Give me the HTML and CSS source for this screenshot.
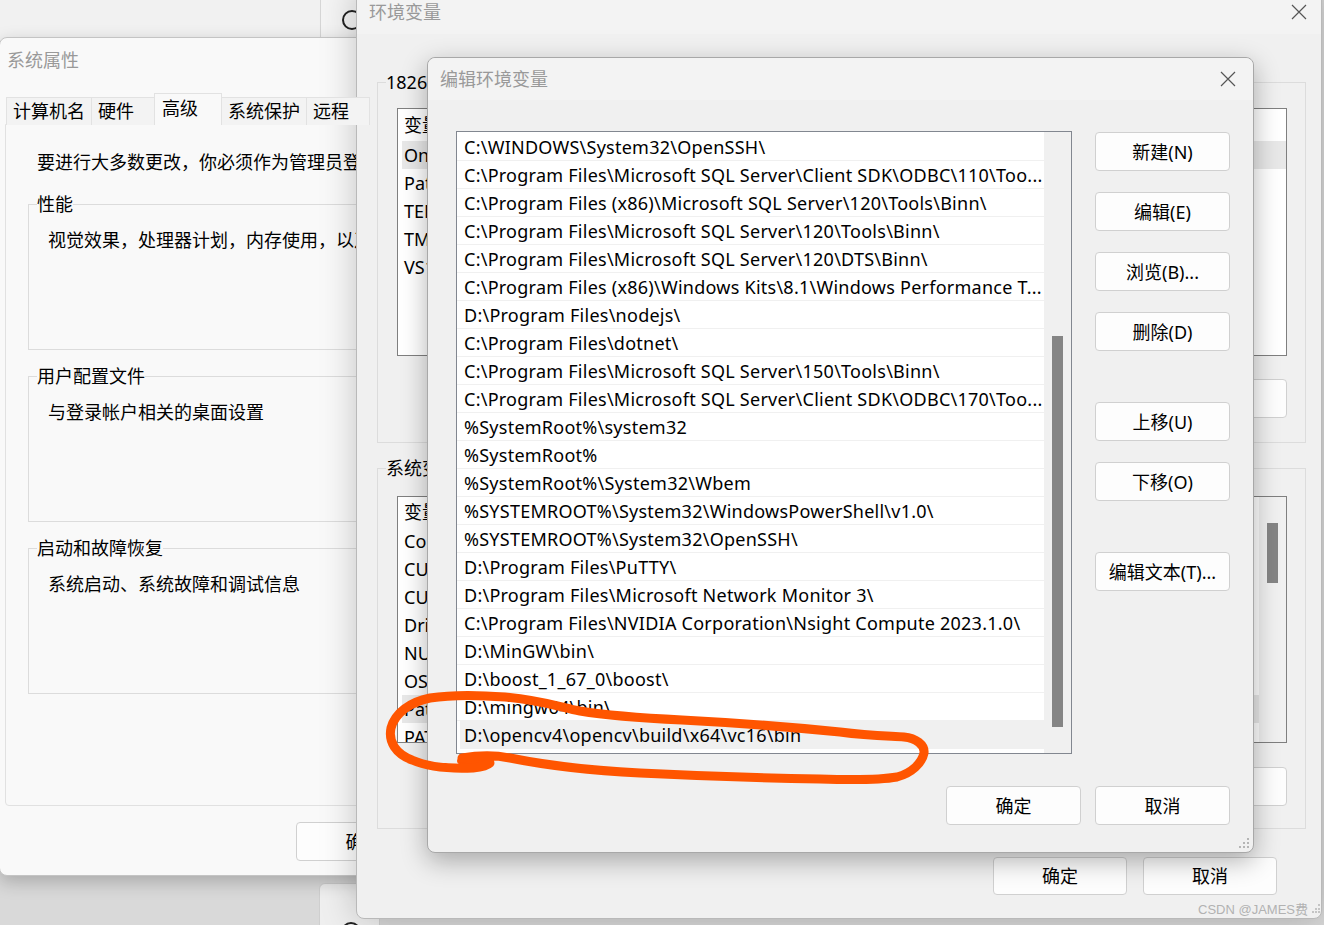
FILE: index.html
```html
<!DOCTYPE html>
<html lang="zh-CN">
<head>
<meta charset="utf-8">
<title>编辑环境变量</title>
<link rel="stylesheet" href="styles.css">
</head>
<body>
<div class="desktop">
  <div class="back-top">
    <div class="back-top-pane"><span class="radio"></span></div>
  </div>
  <div class="back-bottom">
    <div class="back-bottom-box"><span class="radio"></span></div>
  </div>

  <section class="win win-sys">
    <header class="titlebar"><span class="title">系统属性</span></header>
    <nav class="tabs">
      <span class="tab">计算机名</span>
      <span class="tab">硬件</span>
      <span class="tab active">高级</span>
      <span class="tab">系统保护</span>
      <span class="tab">远程</span>
    </nav>
    <div class="tab-panel">
      <p class="note">要进行大多数更改，你必须作为管理员登录。</p>
      <fieldset class="group"><legend>性能</legend><p>视觉效果，处理器计划，内存使用，以及虚拟内存</p></fieldset>
      <fieldset class="group"><legend>用户配置文件</legend><p>与登录帐户相关的桌面设置</p></fieldset>
      <fieldset class="group"><legend>启动和故障恢复</legend><p>系统启动、系统故障和调试信息</p></fieldset>
    </div>
    <div class="sys-foot">
      <button class="btn">确定</button>
      <button class="btn">取消</button>
    </div>
  </section>

  <section class="win win-env">
    <header class="titlebar">
      <span class="title">环境变量</span>
      <span class="close"><svg width="16" height="16" viewBox="0 0 16 16"><path d="M1 1 15 15M15 1 1 15" stroke="#555" stroke-width="1.2" fill="none"/></svg></span>
    </header>
    <div class="env-body">
      <fieldset class="env-group first">
        <legend>18260的用户变量(U)</legend>
        <div class="var-list">
          <div class="var-row head"><span class="c1">变量</span><span>值</span></div>
          <div class="var-row sel"><span class="c1">OneDrive</span><span>C:\Users\18260\OneDrive</span></div>
          <div class="var-row"><span class="c1">Path</span><span>C:\Users\18260\AppData\Local</span></div>
          <div class="var-row"><span class="c1">TEMP</span><span>C:\Users\18260\AppData\Local\Temp</span></div>
          <div class="var-row"><span class="c1">TMP</span><span>C:\Users\18260\AppData\Local\Temp</span></div>
          <div class="var-row"><span class="c1">VS140COMNTOOLS</span><span>C:\Program Files</span></div>
        </div>
        <div class="env-btns">
          <button class="btn">新建(N)...</button>
          <button class="btn">编辑(E)...</button>
          <button class="btn">删除(D)</button>
        </div>
      </fieldset>
      <fieldset class="env-group second">
        <legend>系统变量(S)</legend>
        <div class="var-list scrolled">
          <div class="var-rows">
            <div class="var-row head"><span class="c1">变量</span><span>值</span></div>
            <div class="var-row"><span class="c1">ComSpec</span><span>C:\WINDOWS\system32\cmd.exe</span></div>
            <div class="var-row"><span class="c1">CUDA_PATH</span><span>C:\Program Files</span></div>
            <div class="var-row"><span class="c1">CUDA_PATH_V12_1</span><span>C:\Program Files</span></div>
            <div class="var-row"><span class="c1">DriverData</span><span>C:\Windows</span></div>
            <div class="var-row"><span class="c1">NUMBER_OF_PROCESSORS</span><span>16</span></div>
            <div class="var-row"><span class="c1">OS</span><span>Windows_NT</span></div>
            <div class="var-row sel"><span class="c1">Path</span><span>C:\WINDOWS</span></div>
            <div class="var-row"><span class="c1">PATHEXT</span><span>.COM;.EXE</span></div>
          </div>
          <div class="vscroll"><span class="vthumb"></span></div>
        </div>
        <div class="env-btns">
          <button class="btn">新建(W)...</button>
          <button class="btn">编辑(I)...</button>
          <button class="btn">删除(L)</button>
        </div>
      </fieldset>
      <div class="env-foot">
        <button class="btn">确定</button>
        <button class="btn">取消</button>
      </div>
    </div>
  </section>

  <section class="win win-edit">
    <header class="titlebar">
      <span class="title">编辑环境变量</span>
      <span class="close"><svg width="16" height="16" viewBox="0 0 16 16"><path d="M1 1 15 15M15 1 1 15" stroke="#555" stroke-width="1.2" fill="none"/></svg></span>
    </header>
    <div class="edit-body">
      <div class="edit-main">
        <div class="path-list">
          <div class="path-rows">
            <div class="prow">C:\WINDOWS\System32\OpenSSH\</div>
            <div class="prow">C:\Program Files\Microsoft SQL Server\Client SDK\ODBC\110\Too...</div>
            <div class="prow">C:\Program Files (x86)\Microsoft SQL Server\120\Tools\Binn\</div>
            <div class="prow">C:\Program Files\Microsoft SQL Server\120\Tools\Binn\</div>
            <div class="prow">C:\Program Files\Microsoft SQL Server\120\DTS\Binn\</div>
            <div class="prow">C:\Program Files (x86)\Windows Kits\8.1\Windows Performance T...</div>
            <div class="prow">D:\Program Files\nodejs\</div>
            <div class="prow">C:\Program Files\dotnet\</div>
            <div class="prow">C:\Program Files\Microsoft SQL Server\150\Tools\Binn\</div>
            <div class="prow">C:\Program Files\Microsoft SQL Server\Client SDK\ODBC\170\Too...</div>
            <div class="prow">%SystemRoot%\system32</div>
            <div class="prow">%SystemRoot%</div>
            <div class="prow">%SystemRoot%\System32\Wbem</div>
            <div class="prow">%SYSTEMROOT%\System32\WindowsPowerShell\v1.0\</div>
            <div class="prow">%SYSTEMROOT%\System32\OpenSSH\</div>
            <div class="prow">D:\Program Files\PuTTY\</div>
            <div class="prow">D:\Program Files\Microsoft Network Monitor 3\</div>
            <div class="prow">C:\Program Files\NVIDIA Corporation\Nsight Compute 2023.1.0\</div>
            <div class="prow">D:\MinGW\bin\</div>
            <div class="prow">D:\boost_1_67_0\boost\</div>
            <div class="prow">D:\mingw64\bin\</div>
            <div class="prow sel">D:\opencv4\opencv\build\x64\vc16\bin</div>
          </div>
          <div class="pscroll"><span class="pthumb"></span></div>
        </div>
        <div class="edit-btns">
          <button class="btn">新建(N)</button>
          <button class="btn">编辑(E)</button>
          <button class="btn">浏览(B)...</button>
          <button class="btn">删除(D)</button>
          <button class="btn gap">上移(U)</button>
          <button class="btn">下移(O)</button>
          <button class="btn gap">编辑文本(T)...</button>
        </div>
      </div>
      <div class="edit-foot">
        <button class="btn">确定</button>
        <button class="btn">取消</button>
      </div>
    </div>
    <svg class="grip" width="12" height="12" viewBox="0 0 12 12"><g fill="#b5b5b5"><rect x="9" y="1" width="2" height="2"/><rect x="5" y="5" width="2" height="2"/><rect x="9" y="5" width="2" height="2"/><rect x="1" y="9" width="2" height="2"/><rect x="5" y="9" width="2" height="2"/><rect x="9" y="9" width="2" height="2"/></g></svg>
  </section>

  <svg class="scribble" width="1324" height="925" viewBox="0 0 1324 925">
    <ellipse cx="474" cy="761" rx="17" ry="7" fill="#ff5500"/>
    <path d="M462 758 C 480 755 495 755 510 758 C 540 764 580 770 640 773 C 700 776 760 778 820 779 C 850 780 880 780 897 777 C 912 773 922 763 924 753 C 925 745 916 738 904 737 C 890 736 870 736 840 732 C 800 728 740 723 682 720 C 640 718 610 716 580 711 C 560 707 540 700 505 697 C 480 695 455 694 430 698 C 410 702 395 713 391 728 C 388 742 396 754 412 760 C 428 767 450 769 473 768 C 482 767 488 765 490 763" fill="none" stroke="#ff5500" stroke-width="9" stroke-linecap="round" stroke-linejoin="round"/>
  </svg>

  <div class="watermark"><span>CSDN @JAMES费</span><svg width="10" height="10" viewBox="0 0 10 10"><g fill="#c4c4c4"><rect x="7" y="0" width="2" height="2"/><rect x="4" y="4" width="2" height="2"/><rect x="7" y="4" width="2" height="2"/><rect x="1" y="7" width="2" height="2"/><rect x="4" y="7" width="2" height="2"/><rect x="7" y="7" width="2" height="2"/></g></svg></div>
</div>
</body>
</html>
```

FILE: styles.css
```css
* { box-sizing: border-box; }
html, body { margin: 0; padding: 0; }
body {
  width: 1324px;
  height: 925px;
  overflow: hidden;
  font-family: "Noto Sans", "Noto Sans CJK SC", sans-serif;
  font-size: 18px;
  color: #000;
  background: #dcdcdc;
}
.desktop {
  position: relative;
  width: 1324px;
  height: 925px;
  overflow: hidden;
  background: #d8d8d8;
}

/* windows behind */
.back-top {
  position: absolute;
  left: 0; top: 0;
  width: 380px; height: 44px;
  background: #f1f1f1;
}
.back-top-pane {
  margin-left: 320px;
  height: 100%;
  border-left: 1px solid #d6d6d6;
  background: #f4f4f4;
  padding: 10px 0 0 21px;
}
.radio {
  display: block;
  width: 20px; height: 20px;
  border: 2px solid #222;
  border-radius: 50%;
}
.back-bottom {
  position: absolute;
  left: 0; top: 870px;
  width: 380px; height: 55px;
  background: #d9d9d9;
}
.back-bottom-box {
  margin: 13px 0 0 319px;
  height: 60px;
  background: #efefef;
  border: 1px solid #cfcfcf;
  border-radius: 6px;
  padding: 38px 0 0 21px;
}

/* generic window */
.win {
  position: absolute;
  display: flex;
  flex-direction: column;
  border-radius: 8px;
}
.titlebar {
  display: flex;
  align-items: center;
  justify-content: space-between;
  flex-shrink: 0;
}
.title {
  color: #999;
  font-size: 18px;
  line-height: 24px;
}
.close {
  display: flex;
  align-items: center;
  justify-content: center;
  height: 100%;
}
.btn {
  font: inherit;
  font-size: 18px;
  color: #000;
  background: #fdfdfd;
  border: 1px solid #d0d0d0;
  border-radius: 4px;
  height: 39px;
  padding: 0;
  line-height: 36px;
}

/* window 1: 系统属性 */
.win-sys {
  left: -1px; top: 37px;
  width: 420px; height: 839px;
  background: #f9f9f9;
  border: 1px solid #c4c4c4;
  box-shadow: 0 6px 18px rgba(0,0,0,0.22);
}
.win-sys .titlebar {
  height: 43px;
  padding-left: 7px;
}
.tabs {
  display: flex;
  align-items: flex-end;
  height: 31px;
  margin-top: 13px;
  padding-left: 6px;
  position: relative;
  z-index: 1;
  margin-bottom: -1px;
}
.tab {
  height: 28px;
  min-width: 64px;
  padding: 0 6px;
  line-height: 27px;
  background: #f3f3f3;
  border: 1px solid #e2e2e2;
  border-bottom: none;
  margin-right: -1px;
  white-space: nowrap;
}
.tab.active {
  height: 32px;
  min-width: 68px;
  padding: 0 7px;
  line-height: 28px;
  background: #f9f9f9;
  margin: 0 -1px 0 0;
  position: relative;
  z-index: 2;
}
.tab-panel {
  margin-left: 5px;
  height: 682px;
  border: 1px solid #e1e1e1;
  border-radius: 0 0 4px 4px;
  background: #f9f9f9;
  padding: 25px 0 0 22px;
}
.note {
  margin: 0;
  padding-left: 9px;
  line-height: 24px;
  white-space: nowrap;
}
.group {
  margin: 14px 0 0 0;
  padding: 0 0 0 8px;
  height: 158px;
  border: 1px solid #dcdcdc;
  min-width: 0;
}
.note + .group { margin-top: 18px; }
.group legend {
  padding: 0;
  line-height: 24px;
}
.group p {
  margin: 12px 0 0 0;
  padding-left: 11px;
  line-height: 24px;
  white-space: nowrap;
}
.sys-foot {
  display: flex;
  gap: 14px;
  margin-top: 16px;
  padding-left: 296px;
}
.sys-foot .btn { width: 135px; flex-shrink: 0; }

/* window 2: 环境变量 */
.win-env {
  left: 356px; top: -12px;
  width: 966px; height: 931px;
  background: #f0f0f0;
  border: 1px solid #b9b9b9;
  box-shadow: 0 0 36px rgba(0,0,0,0.22);
}
.win-env .titlebar {
  height: 45px;
  padding-left: 12px;
  background: #f3f3f3;
  border-radius: 8px 8px 0 0;
}
.win-env .close { width: 44px; }
.env-body {
  padding: 0 15px 0 20px;
}
.env-group {
  margin: 13px 0 0 0;
  padding: 0 18px 0 8px;
  height: 373px;
  border: 1px solid #dcdcdc;
  min-width: 0;
}
.env-group.first { margin-top: 36px; }
.env-group legend {
  padding: 0;
  line-height: 24px;
}
.var-list {
  margin: 14px 0 0 11px;
  height: 248px;
  background: #fff;
  border: 1px solid #7f7f7f;
  padding: 1px 0 0 4px;
  overflow: hidden;
}
.env-group.second .var-list { margin-top: 16px; height: 247px; }
.var-list.scrolled {
  display: flex;
  padding: 0 0 0 4px;
}
.var-rows { flex: 1; padding-top: 1px; overflow: hidden; }
.var-row {
  display: flex;
  height: 28px;
  line-height: 28px;
  padding-left: 2px;
  white-space: nowrap;
}
.var-row.head { height: 31px; line-height: 31px; }
.var-list.scrolled .var-row.head { height: 29px; line-height: 29px; }
.var-row.sel { background: #e8e8e8; }
.var-row .c1 { width: 260px; flex-shrink: 0; }
.vscroll {
  width: 27px;
  background: #f0f0f0;
  padding: 26px 0 0 8px;
}
.vthumb {
  display: block;
  width: 11px;
  height: 60px;
  background: #858585;
}
.env-btns {
  display: flex;
  justify-content: flex-end;
  gap: 14px;
  margin-top: 23px;
}
.env-group.second .env-btns { margin-top: 24px; }
.env-btns .btn { width: 134px; }
.env-foot {
  display: flex;
  justify-content: flex-end;
  gap: 16px;
  margin-top: 28px;
  padding-right: 29px;
}
.env-foot .btn { width: 134px; height: 38px; }

/* window 3: 编辑环境变量 */
.win-edit {
  left: 427px; top: 57px;
  width: 827px; height: 796px;
  background: #f0f0f0;
  border: 1px solid #a8a8a8;
  box-shadow: 0 8px 26px rgba(0,0,0,0.3);
}
.win-edit .titlebar {
  height: 42px;
  padding-left: 12px;
  background: #f3f3f3;
  border-radius: 8px 8px 0 0;
}
.win-edit .close { width: 50px; }
.edit-body {
  padding: 31px 23px 0 28px;
}
.edit-main {
  display: flex;
  gap: 23px;
}
.path-list {
  width: 616px;
  height: 623px;
  flex-shrink: 0;
  display: flex;
  background: #fff;
  border: 1px solid #828790;
}
.path-rows {
  flex: 1;
  padding-top: 1px;
  overflow: hidden;
}
.prow {
  height: 28px;
  line-height: 28px;
  padding-left: 7px;
  border-bottom: 1px solid #f0f0f0;
  white-space: nowrap;
  overflow: hidden;
  letter-spacing: 0.25px;
}
.prow.sel { background: #f0f0f0; margin-left: 3px; padding-left: 4px; }
.pscroll {
  width: 27px;
  background: #f0f0f0;
  padding: 204px 0 0 8px;
}
.pthumb {
  display: block;
  width: 11px;
  height: 391px;
  background: #858585;
}
.edit-btns {
  display: flex;
  flex-direction: column;
  gap: 21px;
  padding-top: 1px;
}
.edit-btns .btn { width: 135px; }
.edit-btns .btn.gap { margin-top: 30px; }
.edit-foot {
  display: flex;
  justify-content: flex-end;
  gap: 14px;
  margin-top: 32px;
}
.edit-foot .btn { width: 135px; }
.grip {
  position: absolute;
  right: 3px;
  bottom: 3px;
}

/* annotation overlays */
.scribble {
  position: absolute;
  left: 0; top: 0;
  pointer-events: none;
}
.watermark {
  position: absolute;
  right: 3px;
  top: 899px;
  display: flex;
  align-items: center;
  gap: 3px;
  font-family: "Liberation Sans", "Noto Sans CJK SC", sans-serif;
  font-size: 13px;
  color: #b2b2b2;
}
```
